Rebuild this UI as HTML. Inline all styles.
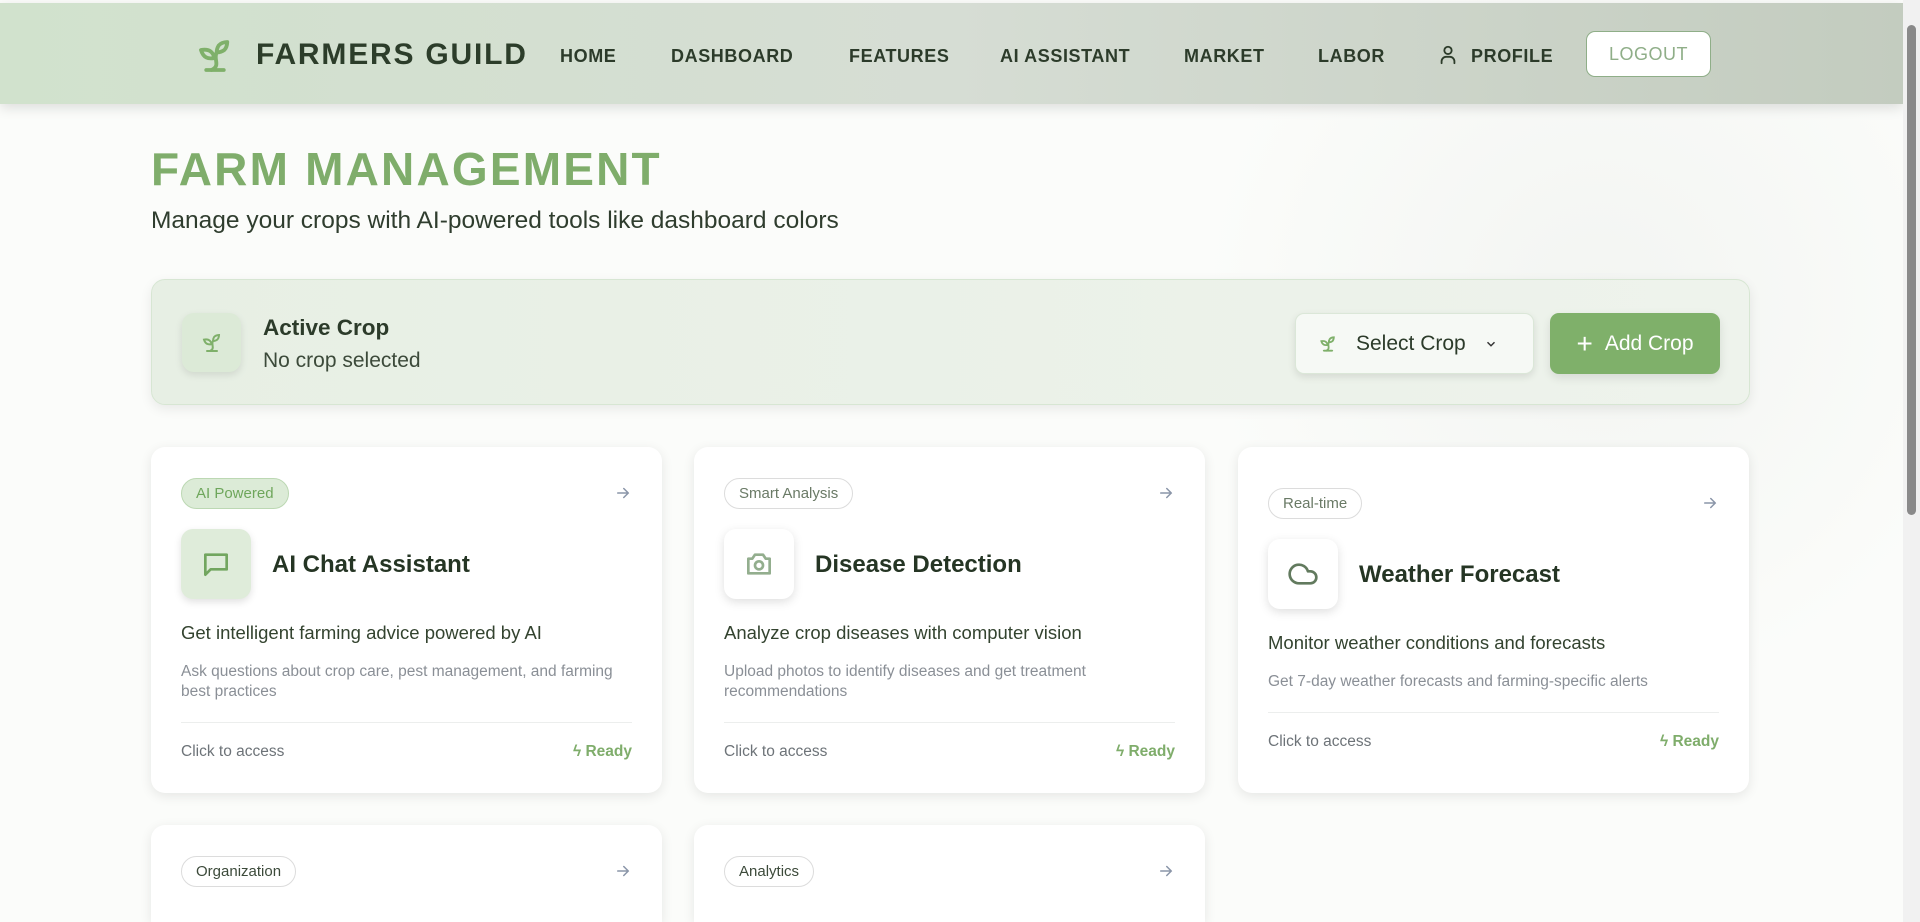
<!DOCTYPE html>
<html><head><meta charset="utf-8"><style>
*{box-sizing:border-box;margin:0;padding:0}
html,body{width:1920px;height:922px;overflow:hidden}
body{font-family:"Liberation Sans",sans-serif;background:#fbfcfa;position:relative;color:#2c3b2a}
.main{position:absolute;left:0;top:0;width:1903px;height:922px;overflow:hidden;background:radial-gradient(circle at 1600px 300px,#f3f5f2 0,#fbfcfa 400px)}
.hdr{position:absolute;left:0;top:3px;width:1903px;height:101px;background:linear-gradient(90deg,#d1e2cd,#d6ddd4 50%,#c3ccbf);box-shadow:0 4px 12px rgba(0,0,0,.12)}
.logo{position:absolute;left:194px;top:32px}
.brand{position:absolute;left:256px;top:35px;font-size:30px;font-weight:bold;letter-spacing:1.8px;color:#2c3d2a}
.nav{position:absolute;top:43px;font-size:18px;font-weight:bold;color:#2c3b2a;letter-spacing:.6px}
.logout{position:absolute;left:1586px;top:28px;width:125px;height:46px;border:1px solid #8fae88;border-radius:9px;background:#fff;color:#8fae88;font-size:18px;text-align:center;line-height:44px;letter-spacing:.5px}
h1{position:absolute;left:151px;top:142px;font-size:46px;font-weight:bold;color:#7fad6b;letter-spacing:2.2px}
.sub{position:absolute;left:151px;top:207px;font-size:24.5px;color:#2f3d2e}
.panel{position:absolute;left:151px;top:279px;width:1599px;height:126px;border:1px solid #d7e6d3;border-radius:14px;background:linear-gradient(90deg,#e7efe4,#eef3ec);box-shadow:0 4px 12px rgba(0,0,0,.08)}
.ibox{position:absolute;border-radius:12px;display:flex;align-items:center;justify-content:center}
.sel{position:absolute;left:1143px;top:33px;width:239px;height:61px;background:#f6f9f5;border:1px solid #dbe7d8;border-radius:9px;box-shadow:0 3px 8px rgba(0,0,0,.1);font-size:21px;display:flex;align-items:center;padding-left:22px;gap:18px}
.add{position:absolute;left:1398px;top:33px;width:170px;height:61px;background:#7fb06a;border-radius:9px;color:#fff;font-size:21px;display:flex;align-items:center;justify-content:center;gap:12px;box-shadow:0 4px 10px rgba(0,0,0,.1)}
.card{position:absolute;width:511px;background:#fff;border-radius:14px;box-shadow:0 3px 12px rgba(0,0,0,.09);padding:0 30px}
.badge{position:absolute;left:30px;height:31px;border-radius:16px;border:1px solid #dcdcdc;font-size:15px;color:#5b6e58;padding:0 14px;line-height:29px}
.arrow{position:absolute;right:30px}
.title{position:absolute;left:121px;font-size:24px;font-weight:bold;color:#253524}
.d1{position:absolute;left:30px;font-size:18.5px;color:#33432f}
.d2{position:absolute;left:30px;font-size:15.5px;color:#8a8f96;line-height:20px;width:440px}
.hr{position:absolute;left:30px;right:30px;height:1px;background:#eceeed}
.f{position:absolute;left:30px;font-size:15.5px;color:#6d7378}
.ready{position:absolute;right:30px;font-size:15.5px;color:#7fad6b;font-weight:bold}
.sb{position:absolute;left:1903px;top:0;width:17px;height:922px;background:#f1f1f1}
.sb div{position:absolute;left:4px;top:25px;width:9px;height:490px;background:#8a8a8a;border-radius:5px}
</style></head><body>
<div class="main">
<div class="hdr">
<svg class="logo" width="42" height="42" viewBox="0 0 24 24" fill="none" stroke="#7fb06a" stroke-width="2.2" stroke-linecap="round" stroke-linejoin="round"><path d="M7 20h10"/><path d="M10 20c5.5-2.5.8-6.4 3-10"/><path d="M9.5 9.4c1.1.8 1.8 2.2 2.3 3.7-2 .4-3.5.4-4.8-.3-1.2-.6-2.3-1.9-3-4.2 2.8-.5 4.4 0 5.5.8z"/><path d="M14.1 6a7 7 0 0 0-1.1 4c1.9-.1 3.3-.6 4.3-1.4 1-1 1.6-2.3 1.7-4.6-2.7.1-4 1-4.9 2z"/></svg>
<div class="brand">FARMERS GUILD</div>
<div class="nav" style="left:560px">HOME</div>
<div class="nav" style="left:671px">DASHBOARD</div>
<div class="nav" style="left:849px">FEATURES</div>
<div class="nav" style="left:1000px">AI ASSISTANT</div>
<div class="nav" style="left:1184px">MARKET</div>
<div class="nav" style="left:1318px">LABOR</div>
<svg style="position:absolute;left:1437px;top:40px" width="22" height="24" viewBox="0 0 24 24" fill="none" stroke="#2c3b2a" stroke-width="2" stroke-linecap="round"><circle cx="12" cy="7" r="4"/><path d="M5 21v-2a5 5 0 0 1 5-5h4a5 5 0 0 1 5 5v2"/></svg>
<div class="nav" style="left:1471px">PROFILE</div>
<div class="logout">LOGOUT</div>
</div>
<h1>FARM MANAGEMENT</h1>
<div class="sub">Manage your crops with AI-powered tools like dashboard colors</div>
<div class="panel">
<div class="ibox" style="left:30px;top:33px;width:59px;height:59px;background:#dcead7;box-shadow:0 3px 8px rgba(0,0,0,.1)"><svg width="24" height="24" viewBox="0 0 24 24" fill="none" stroke="#7fb06a" stroke-width="2" stroke-linecap="round"><path d="M7 20h10"/><path d="M10 20c5.5-2.5.8-6.4 3-10"/><path d="M9.5 9.4c1.1.8 1.8 2.2 2.3 3.7-2 .4-3.5.4-4.8-.3-1.2-.6-2.3-1.9-3-4.2 2.8-.5 4.4 0 5.5.8z"/><path d="M14.1 6a7 7 0 0 0-1.1 4c1.9-.1 3.3-.6 4.3-1.4 1-1 1.6-2.3 1.7-4.6-2.7.1-4 1-4.9 2z"/></svg></div>
<div style="position:absolute;left:111px;top:35px;font-size:22.5px;font-weight:bold;color:#2c3b2a">Active Crop</div>
<div style="position:absolute;left:111px;top:69px;font-size:21px;color:#3c4a3a">No crop selected</div>
<div class="sel"><svg width="20" height="20" viewBox="0 0 24 24" fill="none" stroke="#7fb06a" stroke-width="2.2" stroke-linecap="round"><path d="M7 20h10"/><path d="M10 20c5.5-2.5.8-6.4 3-10"/><path d="M9.5 9.4c1.1.8 1.8 2.2 2.3 3.7-2 .4-3.5.4-4.8-.3-1.2-.6-2.3-1.9-3-4.2 2.8-.5 4.4 0 5.5.8z"/><path d="M14.1 6a7 7 0 0 0-1.1 4c1.9-.1 3.3-.6 4.3-1.4 1-1 1.6-2.3 1.7-4.6-2.7.1-4 1-4.9 2z"/></svg><span>Select Crop</span><svg width="14" height="14" viewBox="0 0 24 24" fill="none" stroke="#333" stroke-width="2.5"><path d="M6 9l6 6 6-6"/></svg></div>
<div class="add"><span style="font-size:28px;font-weight:300;line-height:1">+</span><span>Add Crop</span></div>
</div>

<div class="card" style="left:151px;top:447px;height:346px">
<div class="badge" style="top:31px;background:#dcebd7;border-color:#bcd8b3;color:#6ea65b">AI Powered</div>
<svg class="arrow" style="top:37px" width="18" height="18" viewBox="0 0 24 24" fill="none" stroke="#8a95a8" stroke-width="2" stroke-linecap="round"><path d="M5 12h14M13 6l6 6-6 6"/></svg>
<div class="ibox" style="left:30px;top:82px;width:70px;height:70px;background:#dfecda;box-shadow:0 3px 8px rgba(0,0,0,.12)"><svg width="32" height="32" viewBox="0 0 24 24" fill="none" stroke="#72a65f" stroke-width="2" stroke-linejoin="round"><path d="M4 5h16v11H8l-4 4z"/></svg></div>
<div class="title" style="top:104px">AI Chat Assistant</div>
<div class="d1" style="top:175px">Get intelligent farming advice powered by AI</div>
<div class="d2" style="top:215px">Ask questions about crop care, pest management, and farming best practices</div>
<div class="hr" style="top:275px"></div>
<div class="f" style="top:296px">Click to access</div>
<div class="ready" style="top:296px">ϟ Ready</div>
</div>
<div class="card" style="left:694px;top:447px;height:346px">
<div class="badge" style="top:31px;color:#6a7a66">Smart Analysis</div>
<svg class="arrow" style="top:37px" width="18" height="18" viewBox="0 0 24 24" fill="none" stroke="#8a95a8" stroke-width="2" stroke-linecap="round"><path d="M5 12h14M13 6l6 6-6 6"/></svg>
<div class="ibox" style="left:30px;top:82px;width:70px;height:70px;background:#fff;box-shadow:0 3px 10px rgba(0,0,0,.13)"><svg width="32" height="32" viewBox="0 0 24 24" fill="none" stroke="#93ae8e" stroke-width="2" stroke-linejoin="round"><path d="M4 8h3l2-3h6l2 3h3v11H4z"/><circle cx="12" cy="13" r="3"/></svg></div>
<div class="title" style="top:104px">Disease Detection</div>
<div class="d1" style="top:175px">Analyze crop diseases with computer vision</div>
<div class="d2" style="top:215px">Upload photos to identify diseases and get treatment recommendations</div>
<div class="hr" style="top:275px"></div>
<div class="f" style="top:296px">Click to access</div>
<div class="ready" style="top:296px">ϟ Ready</div>
</div>
<div class="card" style="left:1238px;top:447px;height:346px">
<div class="badge" style="top:41px;color:#6a7a66">Real-time</div>
<svg class="arrow" style="top:47px" width="18" height="18" viewBox="0 0 24 24" fill="none" stroke="#8a95a8" stroke-width="2" stroke-linecap="round"><path d="M5 12h14M13 6l6 6-6 6"/></svg>
<div class="ibox" style="left:30px;top:92px;width:70px;height:70px;background:#fff;box-shadow:0 3px 10px rgba(0,0,0,.13)"><svg width="32" height="32" viewBox="0 0 24 24" fill="none" stroke="#627a5e" stroke-width="2" stroke-linejoin="round"><path d="M17.5 19H9a7 7 0 1 1 6.7-9h1.8a4.5 4.5 0 1 1 0 9z"/></svg></div>
<div class="title" style="top:114px">Weather Forecast</div>
<div class="d1" style="top:185px">Monitor weather conditions and forecasts</div>
<div class="d2" style="top:225px">Get 7-day weather forecasts and farming-specific alerts</div>
<div class="hr" style="top:265px"></div>
<div class="f" style="top:286px">Click to access</div>
<div class="ready" style="top:286px">ϟ Ready</div>
</div>
<div class="card" style="left:151px;top:825px;height:97px;border-radius:14px 14px 0 0">
<div class="badge" style="top:31px;color:#3c4a3a">Organization</div>
<svg class="arrow" style="top:37px" width="18" height="18" viewBox="0 0 24 24" fill="none" stroke="#8a95a8" stroke-width="2" stroke-linecap="round"><path d="M5 12h14M13 6l6 6-6 6"/></svg>
</div>
<div class="card" style="left:694px;top:825px;height:97px;border-radius:14px 14px 0 0">
<div class="badge" style="top:31px;color:#3c4a3a">Analytics</div>
<svg class="arrow" style="top:37px" width="18" height="18" viewBox="0 0 24 24" fill="none" stroke="#8a95a8" stroke-width="2" stroke-linecap="round"><path d="M5 12h14M13 6l6 6-6 6"/></svg>
</div>
</div>
<div class="sb"><div></div></div>
</body></html>
